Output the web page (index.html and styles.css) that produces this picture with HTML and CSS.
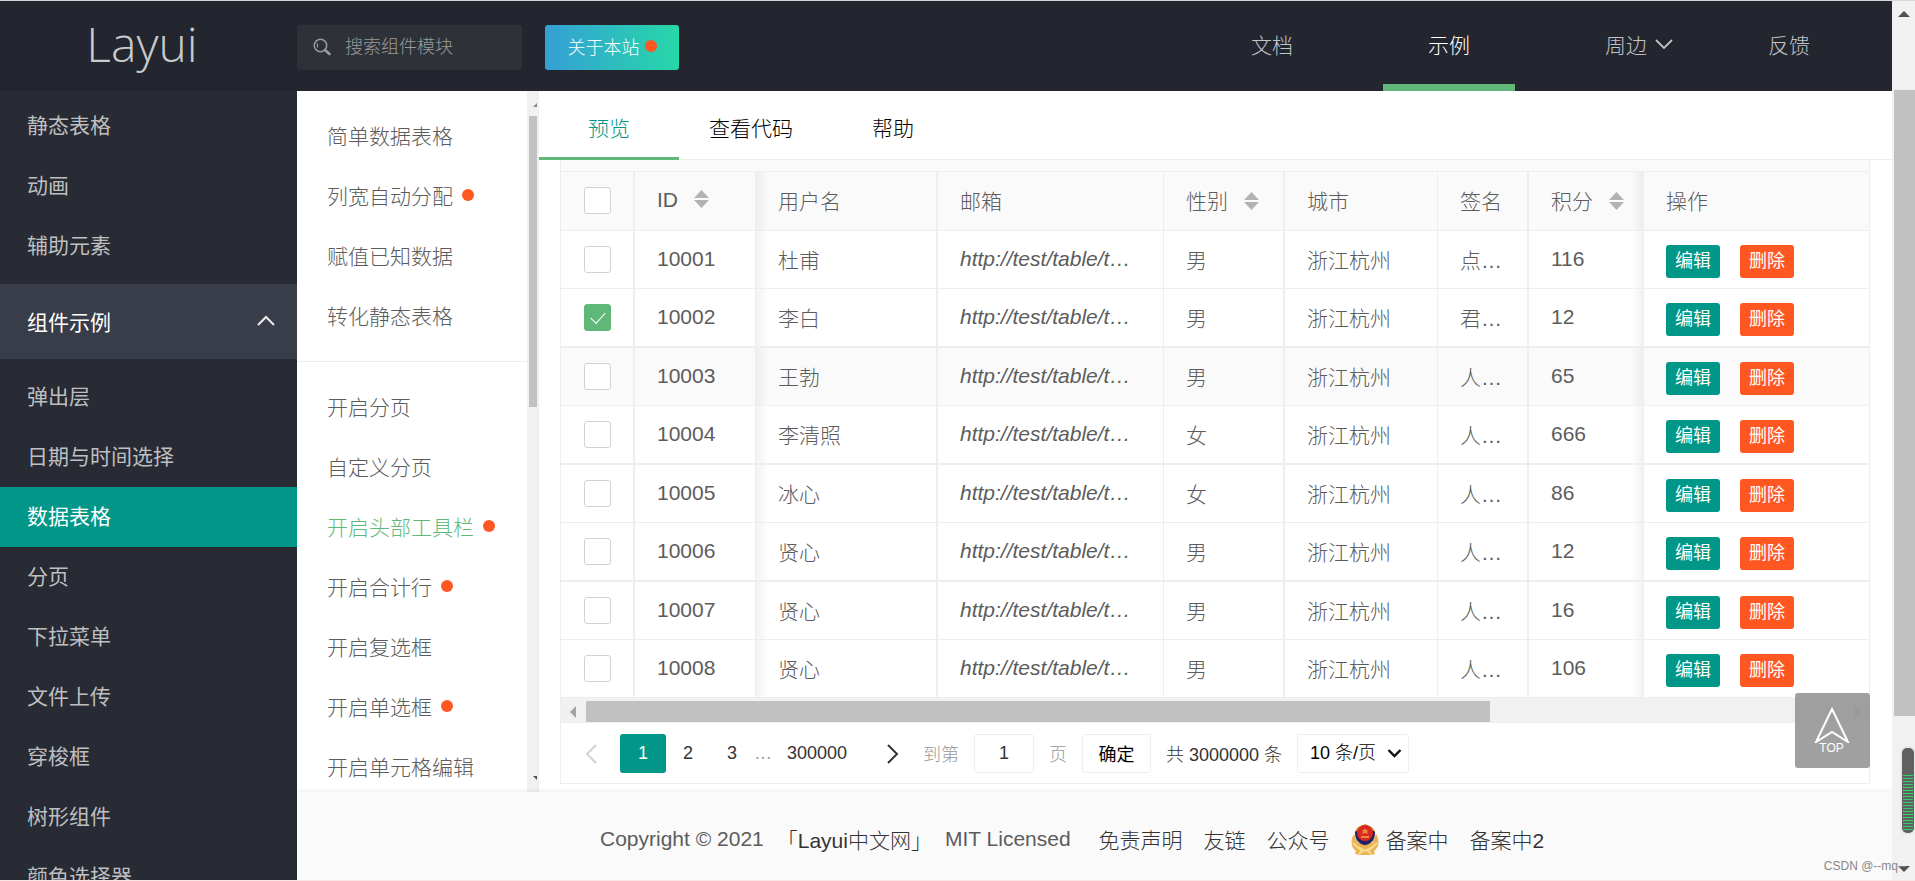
FILE: index.html
```html
<!DOCTYPE html>
<html lang="zh-CN">

<head>
    <meta charset="UTF-8">
    <meta name="viewport" content="width=device-width, initial-scale=1.0">
    <title>数据表格 - Layui</title>
    <link rel="stylesheet" href="styles.css">
</head>

<body>
    <div class="page">
        <header class="header">
            <a class="logo" href="#">Layui</a>
            <label class="search">
                <svg width="18" height="18" viewBox="0 0 18 18" fill="none" stroke="#9a9b9f">
                    <circle cx="7.500" cy="7.500" r="6.200" stroke-width="1.500" />
                    <path d="M4.500 9.500V5.500" stroke-width="1.200" />
                    <path d="M12 12l4.500 4" stroke-width="2.600" stroke-linecap="round" />
                </svg>
                <input type="text" placeholder="搜索组件模块" aria-label="搜索组件模块">
            </label>
            <a class="about" href="#">关于本站<span class="dot"></span></a>
            <nav class="nav">
                <a href="#">文档</a>
                <a href="#" class="this">示例</a>
                <a href="#" class="drop">周边
                    <svg width="18" height="11" viewBox="0 0 18 11" fill="none" stroke="#c2c3c6" stroke-width="1.800"><path d="M1 1l8 8 8-8" /></svg>
                </a>
                <a href="#">反馈</a>
            </nav>
        </header>

        <div class="body">
            <aside class="side">
                <ul class="side-list">
                    <li><a href="#">静态表格</a></li>
                    <li><a href="#">动画</a></li>
                    <li><a href="#">辅助元素</a></li>
                </ul>
                <a class="side-title" href="#">组件示例
                    <svg width="18" height="11" viewBox="0 0 18 11" fill="none" stroke="#eeeeee" stroke-width="2"><path d="M1 10l8-8 8 8" /></svg>
                </a>
                <ul class="side-list">
                    <li><a href="#">弹出层</a></li>
                    <li><a href="#">日期与时间选择</a></li>
                    <li class="this"><a href="#">数据表格</a></li>
                    <li><a href="#">分页</a></li>
                    <li><a href="#">下拉菜单</a></li>
                    <li><a href="#">文件上传</a></li>
                    <li><a href="#">穿梭框</a></li>
                    <li><a href="#">树形组件</a></li>
                    <li><a href="#">颜色选择器</a></li>
                </ul>
            </aside>

            <div class="content">
                <div class="work">
                    <div class="menu">
                        <div class="menu-inner">
                            <ul class="menu-list">
                                <li><a href="#">简单数据表格</a></li>
                                <li><a href="#">列宽自动分配<span class="dot"></span></a></li>
                                <li><a href="#">赋值已知数据</a></li>
                                <li><a href="#">转化静态表格</a></li>
                            </ul>
                            <ul class="menu-list">
                                <li><a href="#">开启分页</a></li>
                                <li><a href="#">自定义分页</a></li>
                                <li class="this"><a href="#">开启头部工具栏<span class="dot"></span></a></li>
                                <li><a href="#">开启合计行<span class="dot"></span></a></li>
                                <li><a href="#">开启复选框</a></li>
                                <li><a href="#">开启单选框<span class="dot"></span></a></li>
                                <li><a href="#">开启单元格编辑</a></li>
                            </ul>
                        </div>
                        <div class="menu-bar">
                            <i class="corner-up"></i>
                            <div class="menu-thumb"></div>
                            <i class="corner-down"></i>
                        </div>
                    </div>

                    <main class="main">
                        <div class="tabs">
                            <a href="#" class="this">预览</a>
                            <a href="#">查看代码</a>
                            <a href="#">帮助</a>
                        </div>
                        <div class="table-box">
                            <div class="table-tool"></div>
                            <table class="table">
                                <colgroup>
                                    <col class="w-check">
                                    <col class="w-id">
                                    <col class="w-name">
                                    <col class="w-mail">
                                    <col class="w-sex">
                                    <col class="w-city">
                                    <col class="w-sign">
                                    <col class="w-score">
                                    <col>
                                </colgroup>
                                <thead>
                                    <tr>
                                        <th><input type="checkbox" aria-label="全选"></th>
                                        <th>ID<svg class="sort" width="15" height="18" viewBox="0 0 15 18" fill="#b2b2b2"><path d="M0 8l7.500-8L15 8zM0 10h15l-7.500 8z" /></svg></th>
                                        <th>用户名</th>
                                        <th>邮箱</th>
                                        <th>性别<svg class="sort" width="15" height="18" viewBox="0 0 15 18" fill="#b2b2b2"><path d="M0 8l7.500-8L15 8zM0 10h15l-7.500 8z" /></svg></th>
                                        <th>城市</th>
                                        <th>签名</th>
                                        <th>积分<svg class="sort" width="15" height="18" viewBox="0 0 15 18" fill="#b2b2b2"><path d="M0 8l7.500-8L15 8zM0 10h15l-7.500 8z" /></svg></th>
                                        <th>操作</th>
                                    </tr>
                                </thead>
                                <tbody>
                                    <tr>
                                        <td><input type="checkbox" aria-label="选择 10001"></td>
                                        <td>10001</td><td>杜甫</td><td><em>http://test/table/t…</em></td><td>男</td><td>浙江杭州</td><td>点…</td><td>116</td>
                                        <td><button class="edit">编辑</button><button class="del">删除</button></td>
                                    </tr>
                                    <tr>
                                        <td><input type="checkbox" aria-label="选择 10002" checked></td>
                                        <td>10002</td><td>李白</td><td><em>http://test/table/t…</em></td><td>男</td><td>浙江杭州</td><td>君…</td><td>12</td>
                                        <td><button class="edit">编辑</button><button class="del">删除</button></td>
                                    </tr>
                                    <tr class="hover">
                                        <td><input type="checkbox" aria-label="选择 10003"></td>
                                        <td>10003</td><td>王勃</td><td><em>http://test/table/t…</em></td><td>男</td><td>浙江杭州</td><td>人…</td><td>65</td>
                                        <td><button class="edit">编辑</button><button class="del">删除</button></td>
                                    </tr>
                                    <tr>
                                        <td><input type="checkbox" aria-label="选择 10004"></td>
                                        <td>10004</td><td>李清照</td><td><em>http://test/table/t…</em></td><td>女</td><td>浙江杭州</td><td>人…</td><td>666</td>
                                        <td><button class="edit">编辑</button><button class="del">删除</button></td>
                                    </tr>
                                    <tr>
                                        <td><input type="checkbox" aria-label="选择 10005"></td>
                                        <td>10005</td><td>冰心</td><td><em>http://test/table/t…</em></td><td>女</td><td>浙江杭州</td><td>人…</td><td>86</td>
                                        <td><button class="edit">编辑</button><button class="del">删除</button></td>
                                    </tr>
                                    <tr>
                                        <td><input type="checkbox" aria-label="选择 10006"></td>
                                        <td>10006</td><td>贤心</td><td><em>http://test/table/t…</em></td><td>男</td><td>浙江杭州</td><td>人…</td><td>12</td>
                                        <td><button class="edit">编辑</button><button class="del">删除</button></td>
                                    </tr>
                                    <tr>
                                        <td><input type="checkbox" aria-label="选择 10007"></td>
                                        <td>10007</td><td>贤心</td><td><em>http://test/table/t…</em></td><td>男</td><td>浙江杭州</td><td>人…</td><td>16</td>
                                        <td><button class="edit">编辑</button><button class="del">删除</button></td>
                                    </tr>
                                    <tr>
                                        <td><input type="checkbox" aria-label="选择 10008"></td>
                                        <td>10008</td><td>贤心</td><td><em>http://test/table/t…</em></td><td>男</td><td>浙江杭州</td><td>人…</td><td>106</td>
                                        <td><button class="edit">编辑</button><button class="del">删除</button></td>
                                    </tr>
                                </tbody>
                            </table>
                            <div class="hbar">
                                <i class="arrow-left"></i>
                                <div class="hbar-thumb"></div>
                                <i class="arrow-right"></i>
                            </div>
                            <div class="pager">
                                <button class="prev" aria-label="上一页"><svg width="12" height="20" viewBox="0 0 12 20" fill="none" stroke="#d2d2d2" stroke-width="2"><path d="M11 1l-9 9 9 9" /></svg></button>
                                <button class="num cur">1</button>
                                <button class="num">2</button>
                                <button class="num">3</button>
                                <span class="more">…</span>
                                <button class="last">300000</button>
                                <button class="next" aria-label="下一页"><svg width="12" height="20" viewBox="0 0 12 20" fill="none" stroke="#333333" stroke-width="2"><path d="M1 1l9 9-9 9" /></svg></button>
                                <div class="skip">
                                    <label for="page">到第</label>
                                    <input type="text" id="page" value="1">
                                    <span>页</span>
                                    <button class="ok">确定</button>
                                    <span class="count">共 3000000 条</span>
                                    <div class="limit">
                                        <select aria-label="每页条数">
                                            <option>10 条/页</option>
                                        </select>
                                        <svg width="15" height="9" viewBox="0 0 15 9" fill="none" stroke="#111111" stroke-width="2.400"><path d="M1.500 1l6 6 6-6" /></svg>
                                    </div>
                                </div>
                            </div>
                        </div>
                    </main>
                </div>

                <footer class="footer">
                    <span>Copyright © 2021</span>
                    <a class="site" href="#">「Layui中文网」</a>
                    <span>MIT Licensed</span>
                    <div class="links">
                        <a href="#">免责声明</a>
                        <a href="#">友链</a>
                        <a href="#">公众号</a>
                        <a href="#" class="police">
                            <svg width="28" height="31" viewBox="0 0 28 31">
                                <path d="M3 10C-1 16 0 24 5 27l-1 3 5 1h10l5-1-1-3c5-3 6-11 2-17l-4 9H7z" fill="#e9b552" />
                                <path d="M2 19l9 8-3 3M26 19l-9 8 3 3M6 23l8 4 8-4" stroke="#f8dd91" stroke-width="2" fill="none" />
                                <path d="M14 0c5 2 8 3 10 7 0 7-3 13-10 15C7 20 4 14 4 7c2-4 5-5 10-7z" fill="#d99a3c" />
                                <path d="M4 8c3-3 17-3 20 0 0 7-3 12-10 13C7 20 4 15 4 8z" fill="#20206f" />
                                <circle cx="14" cy="9" r="8" fill="#d82820" />
                                <path d="M14 4l1 2h2l-1 2 1 2-3-1-3 1 1-2-1-2h2zM10 12h8v2h-8z" fill="#f08a3c" />
                            </svg>备案中</a>
                        <a href="#">备案中2</a>
                    </div>
                </footer>
            </div>
        </div>
    </div>

    <div class="scroll">
        <i class="arrow-up"></i>
        <div class="scroll-thumb"></div>
        <i class="arrow-down"></i>
        <div class="meter"></div>
    </div>

    <button class="top">
        <svg width="36" height="36" viewBox="0 0 36 36" fill="none" stroke="#ffffff" stroke-width="2"><path d="M18 2l16 33-16-10-16 10z" /></svg>
        TOP
    </button>
    <span class="mark">CSDN @--mq--</span>
</body>

</html>
```
FILE: styles.css
```css
* {
    box-sizing: border-box;
}

body {
    margin: 0;
    display: flex;
    height: 100vh;
    overflow: hidden;
    border-top: 1px solid #d5dad9;
    border-bottom: 1px solid #fbe3e4;
    font-family: "Liberation Sans", "Noto Sans CJK SC", sans-serif;
    font-size: 21px;
    font-weight: 300;
    color: #5c5c5c;
    background-color: #fff;
}

a {
    color: inherit;
    text-decoration: none;
}

ul {
    margin: 0;
    padding: 0;
    list-style: none;
}

button,
input,
select {
    font-family: inherit;
    font-size: 18px;
    font-weight: 300;
    padding: 0;
}

button {
    border: none;
    background: none;
    cursor: pointer;
}

.page {
    flex: 1;
    min-width: 0;
    display: flex;
    flex-direction: column;
}

.dot {
    display: inline-block;
    width: 12px;
    height: 12px;
    border-radius: 50%;
    background-color: #ff5722;
}

/* header */
.header {
    flex: none;
    display: flex;
    align-items: center;
    height: 90px;
    padding-top: 2px;
    padding-right: 37px;
    background-color: #23262e;
}

.logo {
    width: 297px;
    padding-right: 13px;
    padding-bottom: 8px;
    text-align: center;
    font-family: "Open Sans", sans-serif;
    font-size: 48px;
    font-weight: 300;
    color: #c9cacc;
}

.search {
    display: flex;
    align-items: center;
    gap: 14px;
    width: 225px;
    height: 45px;
    padding-left: 16px;
    border-radius: 3px;
    background-color: #2f3139;
}

.search input {
    width: 150px;
    border: none;
    outline: none;
    background: none;
    color: #999;
}

.search input::placeholder {
    color: #999;
}

.about {
    display: flex;
    align-items: center;
    justify-content: center;
    gap: 5px;
    width: 134px;
    height: 45px;
    margin-left: 23px;
    padding-bottom: 2px;
    border-radius: 3px;
    font-size: 18px;
    color: #fff;
    background-image: linear-gradient(to right, #359fd6, #27d8a8);
}

.nav {
    display: flex;
    gap: 45px;
    margin-left: auto;
}

.nav a {
    display: flex;
    align-items: center;
    gap: 8px;
    height: 88px;
    padding: 0 45px 6px;
    color: #c2c3c6;
}

.nav .drop {
    padding-right: 5px;
}

.nav .this {
    color: #fff;
    box-shadow: inset 0 -7px #5fb878;
}

/* left menu */
.body {
    flex: 1;
    min-height: 0;
    display: flex;
}

.side {
    width: 297px;
    overflow: hidden;
    font-weight: 400;
    color: #bebfc1;
    background-color: #282b33;
}

.side-list {
    padding: 5px 0 8px;
}

.side-list a {
    display: block;
    padding-left: 27px;
    line-height: 60px;
}

.side-list .this {
    color: #fff;
    background-color: #009688;
}

.side-title {
    display: flex;
    align-items: center;
    justify-content: space-between;
    height: 75px;
    padding: 0 22px 2px 27px;
    color: #fff;
    background-color: #393d49;
}

.side-title + .side-list {
    padding-top: 8px;
}

.content {
    flex: 1;
    min-width: 0;
    display: flex;
    flex-direction: column;
}

.work {
    flex: 1;
    min-height: 0;
    display: flex;
}

/* demo menu */
.menu {
    display: flex;
    width: 242px;
    overflow: hidden;
    border-right: 1px solid #eee;
}

.menu-inner {
    flex: 1;
}

.menu-list {
    padding: 15px 0;
}

.menu-list + .menu-list {
    border-top: 1px solid #eee;
}

.menu-list a {
    display: flex;
    align-items: center;
    gap: 9px;
    height: 60px;
    padding-left: 30px;
    padding-bottom: 2px;
}

.menu-list .this {
    color: #5fb878;
}

.menu-bar {
    display: flex;
    flex-direction: column;
    align-items: flex-end;
    width: 11px;
    padding: 12px 1px 12px 0;
    background-color: #f1f1f1;
}

.menu-thumb {
    width: 8px;
    height: 291px;
    margin-top: 9px;
    margin-bottom: auto;
    background-color: #c1c1c1;
}

.corner-up {
    border-left: 4px solid transparent;
    border-bottom: 4px solid #888;
}

.corner-down {
    border-left: 4px solid transparent;
    border-top: 4px solid #505050;
}

/* main */
.main {
    flex: 1;
    min-width: 0;
}

.tabs {
    display: flex;
    gap: 1px;
    height: 69px;
    padding-left: 10px;
    border-bottom: 1px solid #eee;
    color: #000;
}

.tabs a {
    position: relative;
    padding: 0 39px;
    line-height: 76px;
}

.tabs .this {
    color: #009688;
}

.tabs .this::after {
    content: "";
    position: absolute;
    left: -10px;
    right: -10px;
    bottom: -1px;
    height: 3px;
    background-color: #5fb878;
}

.table-box {
    margin: 0 22px 0 21px;
    border: 1px solid #eee;
    border-top: none;
}

.table-tool {
    height: 12px;
    border-bottom: 1px solid #eee;
    background-color: #fafafa;
}

.table {
    width: 100%;
    table-layout: fixed;
    border-collapse: separate;
    border-spacing: 0;
}

.w-check {
    width: 74px;
}

.w-id,
.w-sex {
    width: 121px;
}

.w-name {
    width: 182px;
}

.w-mail {
    width: 226px;
}

.w-city {
    width: 153px;
}

.w-sign {
    width: 91px;
}

.w-score {
    width: 115px;
}

.table th,
.table td {
    height: 58px;
    padding: 0 0 2px 22px;
    border-right: 1px solid #eee;
    border-bottom: 1px solid #eee;
    text-align: left;
    font-weight: 300;
    white-space: nowrap;
}

.table th {
    height: 59px;
    background-color: #fafafa;
}

.table tr:nth-child(even) td {
    height: 59px;
    border-bottom-width: 2px;
}

.table tr:last-child td {
    height: 58px;
    border-bottom-width: 1px;
}

.table tr > :nth-child(odd) {
    border-right-width: 2px;
}

.table tr > :last-child {
    border-right: none;
}

.table td:first-child {
    padding-bottom: 0;
}

.table td:last-child {
    padding-top: 4px;
    padding-bottom: 0;
}

.table .hover td {
    background-color: #fafafa;
}

/* shade beside the fixed columns */
.table tr > :nth-child(3) {
    background-image: linear-gradient(to right, rgba(0, 0, 0, 0.05), transparent 12px);
}

.table tr > :nth-child(8) {
    background-image: linear-gradient(to left, rgba(0, 0, 0, 0.05), transparent 12px);
}

.table input {
    appearance: none;
    position: relative;
    display: block;
    width: 27px;
    height: 27px;
    margin: 0 0 0 1px;
    border: 1px solid #d2d2d2;
    border-radius: 3px;
    background-color: #fff;
}

.table input:checked {
    border-color: #5fb878;
    background-color: #5fb878;
}

.table input:checked::after {
    content: "";
    position: absolute;
    left: 9px;
    top: 4px;
    width: 7px;
    height: 13px;
    border: solid #fff;
    border-width: 0 1px 1px 0;
    transform: rotate(42deg);
}

.sort {
    margin-left: 16px;
    vertical-align: -1px;
}

.edit,
.del {
    display: inline-block;
    width: 54px;
    height: 33px;
    border-radius: 3px;
    font-weight: 400;
    line-height: 33px;
    color: #fff;
    vertical-align: middle;
    background-color: #009688;
}

.del {
    margin-left: 20px;
    background-color: #ff5722;
}

/* horizontal scroll bar */
.hbar {
    display: flex;
    align-items: center;
    height: 25px;
    padding: 3px 8px 0 9px;
    border-bottom: 1px solid #eee;
    background-color: #f1f1f1;
}

.hbar-thumb {
    flex: none;
    width: 70%;
    height: 21px;
    margin-left: 10px;
    margin-right: auto;
    background-color: #c1c1c1;
}

.arrow-left,
.arrow-right {
    border: 6px solid transparent;
    border-left-width: 0;
    border-right: 6px solid #a3a3a3;
}

.arrow-right {
    border-right-width: 0;
    border-left: 6px solid #a3a3a3;
}

/* pager */
.pager {
    display: flex;
    align-items: center;
    height: 60px;
    font-size: 18px;
    color: #333;
}

.pager button {
    height: 39px;
    color: #333;
}

.pager .prev {
    width: 59px;
}

.pager .prev svg,
.pager .next svg {
    display: block;
    margin: 2px auto 0;
}

.pager .num {
    width: 44px;
}

.pager .cur {
    width: 46px;
    border-radius: 3px;
    color: #fff;
    background-color: #009688;
}

.more {
    width: 18px;
    color: #999;
}

.pager .last {
    width: 90px;
}

.pager .next {
    width: 61px;
}

.skip {
    display: flex;
    align-items: center;
    gap: 15px;
    color: #999;
}

.skip input,
.skip select,
.skip .ok {
    height: 39px;
    border: 1px solid #eee;
    border-radius: 3px;
    background-color: #fff;
}

.skip input {
    width: 60px;
    text-align: center;
    color: #333;
}

.skip .ok {
    width: 69px;
    font-weight: 400;
    color: #000;
}

.skip .count {
    color: #333;
}

.limit {
    position: relative;
}

.limit select {
    appearance: none;
    width: 112px;
    padding: 0 12px;
    color: #000;
}

.limit svg {
    position: absolute;
    right: 7px;
    top: 15px;
    pointer-events: none;
}

/* footer */
.footer {
    display: flex;
    align-items: center;
    gap: 13px;
    height: 88px;
    padding-top: 6px;
    padding-left: 303px;
    background-color: #fafafa;
    box-shadow: 0 -1px 5px rgba(0, 0, 0, 0.08);
}

.footer a {
    color: #333;
}

.links {
    display: flex;
    gap: 21px;
    margin-left: 15px;
}

.police {
    display: flex;
    align-items: center;
    gap: 7px;
}

/* page scroll bar */
.scroll {
    position: relative;
    display: flex;
    flex-direction: column;
    align-items: center;
    width: 23px;
    padding: 10px 0 8px;
    background-color: #f1f1f1;
}

.scroll-thumb {
    align-self: flex-end;
    width: 21px;
    height: 626px;
    margin-top: 73px;
    margin-bottom: auto;
    background-color: #c1c1c1;
}

.arrow-up,
.arrow-down {
    border: 6px solid transparent;
    border-top-width: 0;
    border-bottom-color: #505050;
}

.arrow-down {
    border-top: 6px solid #505050;
    border-bottom-width: 0;
}

.meter {
    position: absolute;
    right: 1px;
    bottom: 47px;
    width: 12px;
    height: 85px;
    border: 1px solid #606060;
    border-top-width: 27px;
    border-radius: 5px;
    background-image: repeating-linear-gradient(#35d067 0, #35d067 1px, #606060 1px, #606060 3px);
    box-shadow: 0 0 0 2px #e8e8e8;
}

.top {
    position: absolute;
    right: 45px;
    bottom: 113px;
    display: flex;
    flex-direction: column;
    align-items: center;
    width: 75px;
    height: 75px;
    padding-top: 14px;
    padding-right: 2px;
    border-radius: 3px;
    font-size: 12px;
    line-height: 10px;
    color: #fff;
    background-color: rgba(150, 150, 150, 0.9);
}

.mark {
    position: absolute;
    right: 9px;
    bottom: 8px;
    font-size: 12px;
    color: #888;
}
```
